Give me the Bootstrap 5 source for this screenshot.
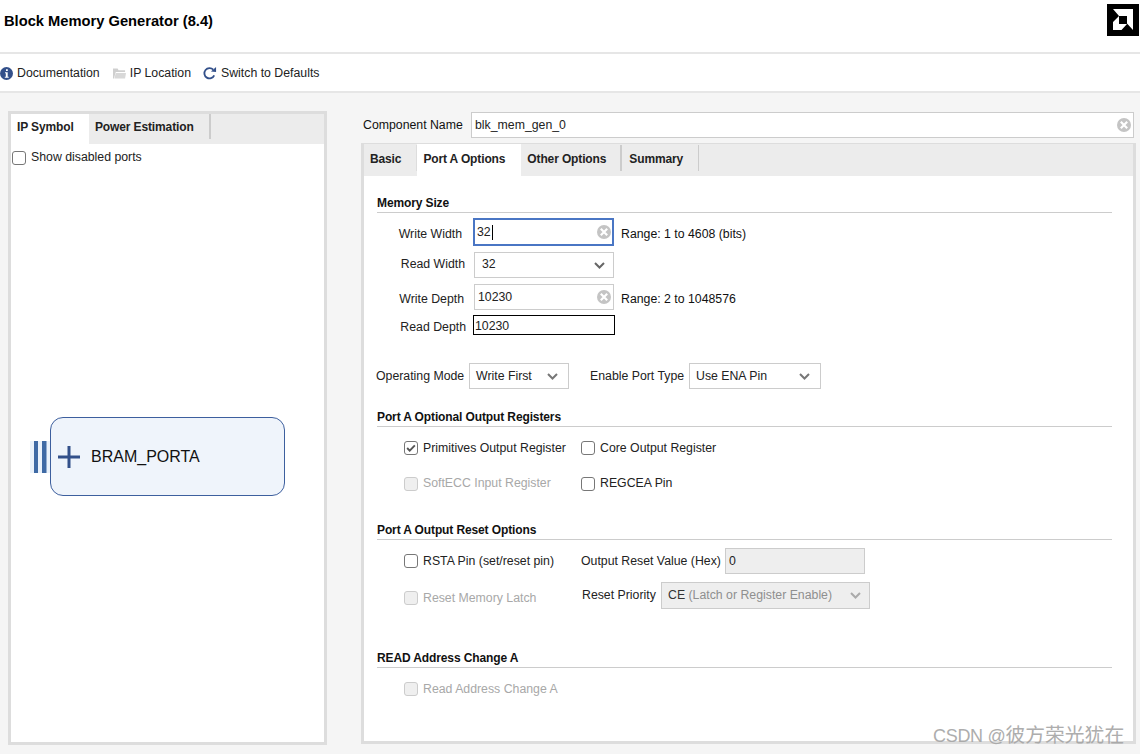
<!DOCTYPE html>
<html lang="en"><head><meta charset="utf-8"><title>Block Memory Generator</title>
<link href="https://cdn.jsdelivr.net/npm/bootstrap@5.3.0/dist/css/bootstrap.min.css" rel="stylesheet">
<style>
html,body{height:754px;overflow:hidden}
body{background:#f5f5f5;font:12.3px/15px "Liberation Sans",sans-serif;color:#111;position:relative}
.top-bar{height:54px;background:#fff;border-bottom:2px solid #e6e6e6;padding:0 1px 0 4px}
.top-title{font-size:14.7px;font-weight:700;margin:0 0 10px;line-height:18px;color:#000}
.amd-logo{margin-bottom:13px;display:block}
.tool-bar{height:39px;background:#fff;border-bottom:2px solid #e6e6e6;gap:13px;padding-top:1px}
.tool-item{display:flex;align-items:center;gap:4px;color:#222}
.left-pane{width:319px;height:634px;margin:18px 0 0 8px;background:#fff;border:3px solid #ddd}
.right-pane{width:775px;margin:19px 0 0 34px}
.strip{display:flex;background:#ececec;height:30px}
.strip-item{font-weight:700;font-size:12px;letter-spacing:-.13px;white-space:nowrap;padding:3px 14px 0 6px;display:flex;align-items:center;border-right:2px solid #ccc;margin:1px 0 5px;color:#222}
.strip-item.on{background:#fff;margin:0;border:0;padding:0 16px 1px 6px}
.left-pane .strip-item{margin:0 0 5px;padding:1px 15px 0 6px}
.left-pane .strip-item.on{margin:0;padding:0 0 3px 6px;width:78px}
.name-row{height:26px;display:flex;align-items:center}
.name-row label{width:110px;padding-left:2px}
.txt-box{height:26px;background:#fff;border:1px solid #ccc;display:flex;align-items:center;padding:0 3px;position:relative;color:#222}
.x-ico{position:absolute;right:2px;top:50%;margin-top:-7px}
.tab-box{height:601px;margin-top:5px;background:#fff;border:3px solid #ddd;border-top:1px solid #ddd}
.tab-body{padding:19px 21px 0 13px;position:relative}
.sec-title{font-weight:700;font-size:12px;letter-spacing:-.12px;color:#111;border-bottom:1px solid #ccc;line-height:15px;padding-top:1px;height:18px}
.frow{display:flex;align-items:center}
.flabel{text-align:right;color:#222;flex:none}
.nudge{padding-top:4px}
.sel-box{height:26px;background:#fff;border:1px solid #ccc;display:flex;align-items:center;justify-content:space-between;padding:0 14px 0 6px;color:#222}
.sel-box.off{background:#eee;color:#8f8f8f;height:27px}
.sel-box.off b{font-weight:400;color:#333}
.chk-wrap{display:flex;align-items:center;gap:5px;color:#222;flex:none}
.chk-wrap.off{color:#a8a8a8}
.tick{width:14px;height:14px;border:1px solid #777;border-radius:3px;background:#fff;flex:none;display:block}
.tick.off{border-color:#ccc;background:#efefef}
.sym-box{width:235px;height:79px;border:1px solid #3d5f9e;border-radius:13px;background:#eff4fb;display:flex;align-items:center;font-size:16px;color:#111}
.water{position:absolute;left:933px;top:724px;font:18px/22px "Liberation Sans","Noto Sans CJK SC",sans-serif;color:#a5a5a5;opacity:.9;letter-spacing:-.3px}
.water span{font-size:19.800px;letter-spacing:0}
</style></head><body>
<div class="top-bar d-flex justify-content-between align-items-center">
<h1 class="top-title">Block Memory Generator (8.4)</h1>
<svg class="amd-logo" width="32" height="32" viewBox="0 0 32 32"><rect width="32" height="32" fill="#000"/><path fill="#fff" d="M6 5h20v21l-6-6.500V12H12zM6 18l6-6v8h8l-5.500 6H6z"/></svg>
</div>
<div class="tool-bar d-flex align-items-center">
<span class="tool-item"><svg width="13" height="13" viewBox="0 0 13 13"><circle cx="6.500" cy="6.500" r="6.500" fill="#33508a"/><path fill="#fff" d="M6 2.200h1.800v1.700H6zM5 5.200h2.700v4.600h1v1H4.800v-1h1V6.200H5z"/></svg>Documentation</span>
<span class="tool-item"><svg width="13" height="13" viewBox="0 0 14 13"><path fill="#cfcfcf" d="M0 1h5l1 2h7v2H3L1 12H0z"/><path fill="#d8d8d8" d="M3 6h11l-1 6H1.500z"/></svg>IP Location</span>
<span class="tool-item" style="margin-left:-1px"><svg width="14" height="14" viewBox="0 0 15 14"><path fill="none" stroke="#33508a" stroke-width="2" d="M12 9.500A5.500 5.500 0 1 1 11 3.500"/><path fill="#33508a" d="M8.500 5.500L14 6V.5z"/></svg>Switch to Defaults</span>
</div>
<div class="d-flex">
<section class="left-pane">
<div class="strip"><div class="strip-item on">IP Symbol</div><div class="strip-item">Power Estimation</div></div>
<div class="chk-wrap" style="padding:6px 0 0 1px"><span class="tick"></span>Show disabled ports</div>
<div class="d-flex align-items-center" style="margin-top:252px;margin-left:19px">
<svg width="20" height="32" viewBox="0 0 20 32" class="flex-none"><rect width="20" height="32" fill="#eaf2fb"/><rect x="4" y="0" width="4" height="32" fill="#3f6aa5"/><rect x="12" y="0" width="4.500" height="32" fill="#3f6aa5"/></svg>
<div class="sym-box"><svg width="22" height="22" viewBox="0 0 22 22" style="margin-left:7px"><path fill="#33508a" d="M9.500 0h3v9.500H22v3h-9.500V22h-3v-9.500H0v-3h9.500z"/></svg><span style="margin-left:11px">BRAM_PORTA</span></div>
</div>
</section>
<section class="right-pane">
<div class="name-row"><label>Component Name</label><div class="txt-box" style="width:663px">blk_mem_gen_0<svg class="x-ico" width="14" height="14" viewBox="0 0 14 14"><circle cx="7" cy="7" r="7" fill="#c4c4c4"/><path stroke="#fff" stroke-width="2.200" d="M3.800 3.800l6.400 6.400M10.200 3.800l-6.400 6.400"/></svg></div></div>
<div class="tab-box">
<div class="strip" style="height:32px"><div class="strip-item" style="padding-right:15px;border-right:1px solid #ddd">Basic</div><div class="strip-item on">Port A Options</div><div class="strip-item" style="padding-right:14px">Other Options</div><div class="strip-item" style="padding-left:7px;padding-right:15px;border-right:1px solid #ccc">Summary</div></div>
<div class="tab-body">
<div class="sec-title">Memory Size</div>
<div class="frow" style="margin-top:5px;height:28px"><span class="flabel nudge" style="width:85px">Write Width</span><div class="txt-box" style="width:141px;height:28px;margin-left:11px;border:2px solid #4a76c4;padding-left:2px">32<span style="width:1px;height:15px;background:#000;margin-left:1px"></span><svg class="x-ico" style="right:1px" width="14" height="14" viewBox="0 0 14 14"><circle cx="7" cy="7" r="7" fill="#c4c4c4"/><path stroke="#fff" stroke-width="2.200" d="M3.800 3.800l6.400 6.400M10.200 3.800l-6.400 6.400"/></svg></div><span class="nudge" style="margin-left:7px">Range: 1 to 4608 (bits)</span></div>
<div class="frow" style="margin-top:6px;height:26px"><span class="flabel" style="width:88px;padding-bottom:2px">Read Width</span><div class="sel-box" style="width:140px;margin-left:9px;padding-left:7px;padding-right:8px"><span style="padding-bottom:2px">32</span><svg width="11" height="7" viewBox="0 0 11 7"><path fill="none" stroke="#666" stroke-width="2" d="M1 1l4.500 4.500L10 1"/></svg></div></div>
<div class="frow" style="margin-top:6px;height:26px"><span class="flabel nudge" style="width:87px">Write Depth</span><div class="txt-box" style="width:140px;margin-left:10px">10230<svg class="x-ico" width="14" height="14" viewBox="0 0 14 14"><circle cx="7" cy="7" r="7" fill="#c4c4c4"/><path stroke="#fff" stroke-width="2.200" d="M3.800 3.800l6.400 6.400M10.200 3.800l-6.400 6.400"/></svg></div><span class="nudge" style="margin-left:7px">Range: 2 to 1048576</span></div>
<div class="frow" style="margin-top:5px;height:20px"><span class="flabel nudge" style="width:89px">Read Depth</span><div class="txt-box" style="width:142px;height:20px;margin-left:7px;border:1px solid #000;padding:3px 0 0 1px">10230</div></div>
<div class="frow" style="margin-top:28px;height:26px"><span class="flabel text-start" style="width:93px;margin-left:-1px">Operating Mode</span><div class="sel-box" style="width:100px;padding-right:10px">Write First<svg width="11" height="7" viewBox="0 0 11 7"><path fill="none" stroke="#777" stroke-width="2" d="M1 1l4.500 4.500L10 1"/></svg></div><span class="flabel text-start" style="width:99px;margin-left:21px">Enable Port Type</span><div class="sel-box" style="width:132px;padding-right:10px">Use ENA Pin<svg width="11" height="7" viewBox="0 0 11 7"><path fill="none" stroke="#777" stroke-width="2" d="M1 1l4.500 4.500L10 1"/></svg></div></div>
<div class="sec-title" style="margin-top:20px">Port A Optional Output Registers</div>
<div class="frow" style="margin:11px 0 0 27px;height:18px;padding-top:2px"><label class="chk-wrap" style="width:177px"><svg class="tick" viewBox="0 0 14 14"><path fill="none" stroke="#555" stroke-width="2.200" d="M2.500 7l3 3 6-6"/></svg>Primitives Output Register</label><label class="chk-wrap"><span class="tick"></span>Core Output Register</label></div>
<div class="frow" style="margin:18px 0 0 27px;height:18px;padding-top:1px"><label class="chk-wrap off" style="width:177px"><span class="tick off"></span>SoftECC Input Register</label><label class="chk-wrap"><span class="tick"></span>REGCEA Pin</label></div>
<div class="sec-title" style="margin-top:30px">Port A Output Reset Options</div>
<div class="frow" style="margin:8px 0 0 27px;height:26px"><label class="chk-wrap" style="width:177px"><span class="tick"></span>RSTA Pin (set/reset pin)</label><span class="flabel text-start" style="width:144px">Output Reset Value (Hex)</span><div class="txt-box" style="width:140px;background:#eee">0</div></div>
<div class="frow" style="margin:8px 0 0 27px;height:27px"><label class="chk-wrap off" style="width:178px;padding-top:5px"><span class="tick off"></span>Reset Memory Latch</label><span class="flabel text-start" style="width:79px">Reset Priority</span><div class="sel-box off" style="width:209px;padding-right:8px"><span><b>CE</b> (Latch or Register Enable)</span><svg width="11" height="7" viewBox="0 0 11 7"><path fill="none" stroke="#aaa" stroke-width="2" d="M1 1l4.500 4.500L10 1"/></svg></div></div>
<div class="sec-title" style="margin-top:41px">READ Address Change A</div>
<div class="frow" style="margin:12px 0 0 27px;height:18px"><label class="chk-wrap off"><span class="tick off"></span>Read Address Change A</label></div>
</div>
</div>
</section>
</div>
<div class="water">CSDN @<span>彼方荣光犹在</span></div>
<script src="https://cdn.jsdelivr.net/npm/bootstrap@5.3.0/dist/js/bootstrap.bundle.min.js"></script>
</body></html>
